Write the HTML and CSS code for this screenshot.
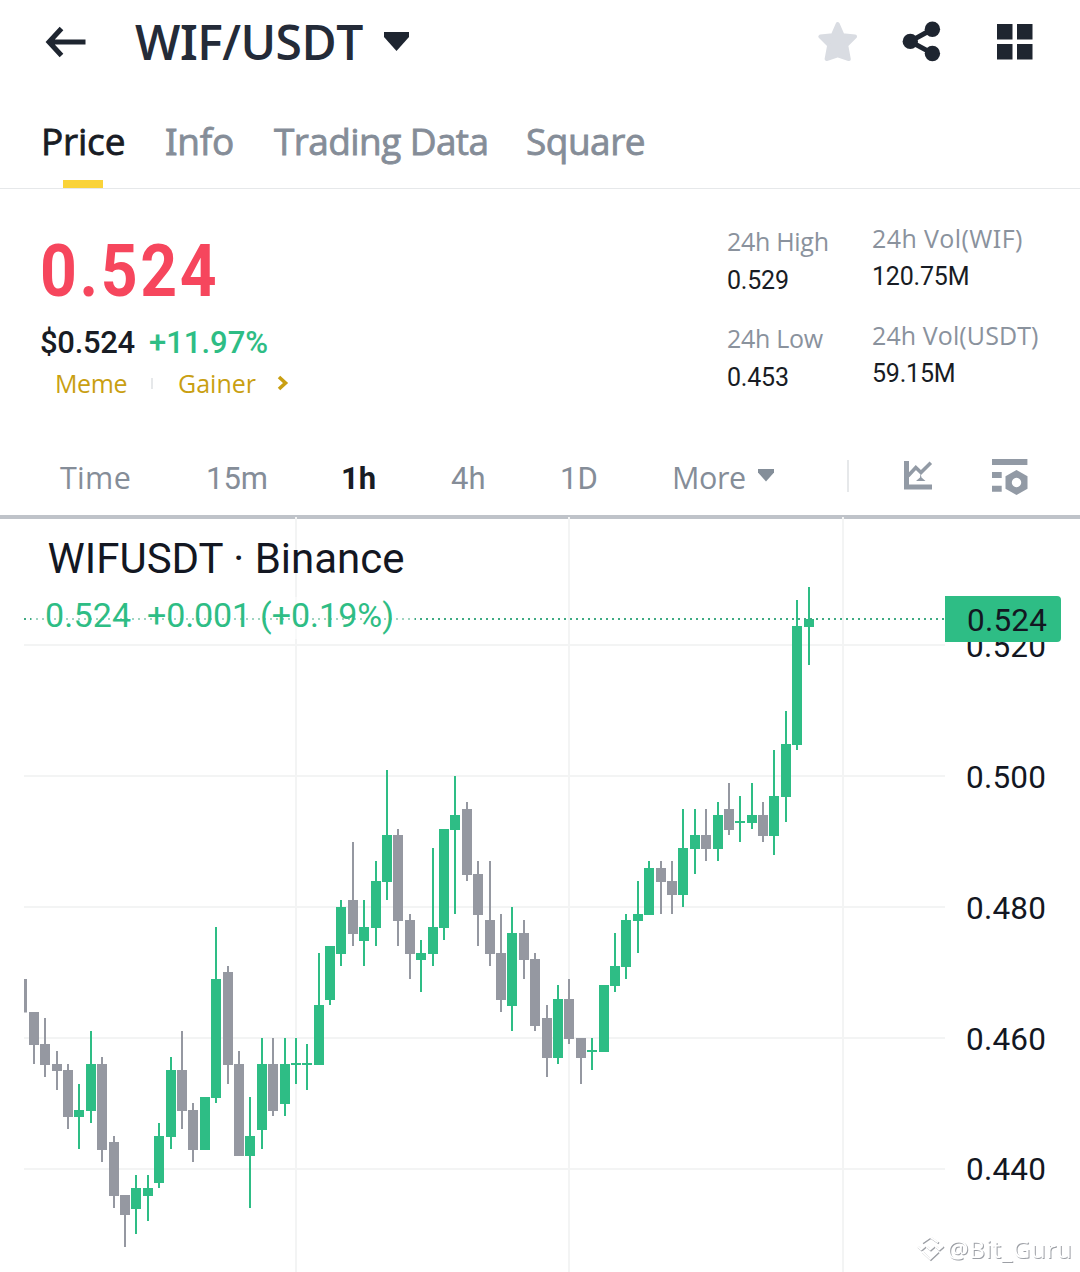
FILE: index.html
```html
<!DOCTYPE html>
<html lang="en">
<head>
<meta charset="utf-8">
<title>WIF/USDT</title>
<link rel="stylesheet" href="styles.css">
</head>
<body>
<header class="topbar">
  <svg class="back" width="44" height="36" viewBox="44 24 44 36"><path d="M61.500 28.500 49 42l12.500 13.500M49 42H85.500" fill="none" stroke="#1e2530" stroke-width="5"/></svg>
  <h1 class="pair">W<span class="slab">I</span>F/USDT</h1>
  <svg class="pair-caret" width="25" height="20" viewBox="0 0 25 20"><path d="M0 0H25V5L12.500 19 0 5Z" fill="#1e2530"/></svg>
  <div class="actions">
    <svg width="40" height="42" viewBox="818 20 40 42"><path d="M837.700 24 842.600 35.200 855 36.600 846.200 45.200 848.800 59 837.700 55.400 826.600 59 829.200 45.200 820.400 36.600 832.800 35.200Z" fill="#d9dce2" stroke="#d9dce2" stroke-width="4" stroke-linejoin="round"/></svg>
    <svg width="40" height="42" viewBox="902 20 40 42"><path d="M932.300 29.300 910.200 41.400 932.300 53.400" fill="none" stroke="#1e2530" stroke-width="5"/><g fill="#1e2530"><circle cx="910.300" cy="41.400" r="7.700"/><circle cx="932.400" cy="29.300" r="7.700"/><circle cx="932.400" cy="53.500" r="7.700"/></g></svg>
    <svg width="36" height="42" viewBox="997 20 36 42"><path d="M997 24h15.500v15.500H997zM1017 24h15.500v15.500H1017zM997 44h15.500v15.500H997zM1017 44h15.500v15.500H1017z" fill="#1e2530"/></svg>
  </div>
</header>

<nav class="tabs">
  <a class="tab active">Price</a>
  <a class="tab info"><span class="slab">I</span>nfo</a>
  <a class="tab trading">Trading Data</a>
  <a class="tab square">Square</a>
</nav>

<section class="summary">
  <div class="quote">
    <div class="last">0.524</div>
    <div class="change"><span class="usd">$0.524</span><span class="pct">+11.97%</span></div>
    <div class="tags">
      <span class="meme">Meme</span><i class="tag-rule"></i><span class="gainer">Gainer</span>
      <svg width="12" height="16" viewBox="0 0 12 16"><path d="M2 2 8.500 8 2 14" fill="none" stroke="#c99f12" stroke-width="3.600"/></svg>
    </div>
  </div>
  <dl class="stats high-low">
    <dt class="s-high">24h High</dt><dd>0.529</dd>
    <dt class="s-low">24h Low</dt><dd>0.453</dd>
  </dl>
  <dl class="stats volume">
    <dt class="s-wif">24h Vol(W<span class="slab">I</span>F)</dt><dd>120.75M</dd>
    <dt class="s-usdt">24h Vol(USDT)</dt><dd>59.15M</dd>
  </dl>
</section>

<nav class="frames">
  <a class="word f-time">Time</a>
  <a class="f-15m">15m</a>
  <a class="f-1h selected">1h</a>
  <a class="f-4h">4h</a>
  <a class="f-1d">1D</a>
  <a class="word f-more">More</a>
  <svg class="more-caret" width="16" height="13" viewBox="0 0 16 13"><path d="M0 0H16V3.500L8 12.500 0 3.500Z" fill="#848e99"/></svg>
  <i class="frame-rule"></i>
  <svg class="line-icon" width="30" height="36" viewBox="903 459 30 36"><g fill="#929aa5"><path d="M904 461h5v23.500h23v5H904zM920.500 473.500l1 4 4 3.500h-9.500l4-3.500z"/><path d="M908 476l7.800-8.500 5.200 5 9.800-9.800" fill="none" stroke="#929aa5" stroke-width="3.600"/></g></svg>
  <svg class="settings-icon" width="37" height="38" viewBox="991 458 37 38"><path d="M992 459h35.400v6H992zM992 472h9.700v6H992zM992 485.700h9.700v6H992zM1016.500 470l11 6.200v12.500l-11 6.200-11-6.200v-12.500zM1016.500 477.800a4.700 4.700 0 1 0 .01 0z" fill="#929aa5" fill-rule="evenodd"/></svg>
</nav>

<main class="chart">
  <svg width="1080" height="757" viewBox="0 515 1080 757">
    <rect y="515" width="1080" height="4" fill="#bfc3c9"/>
    <g class="grid">
      <path d="M24 645H945M24 776H945M24 907H945M24 1038H945M24 1169H945"/>
      <path d="M296 517V1272M569 517V1272M843 517V1272"/>
    </g>
    <g id="candles"></g>
    <path class="last-line" d="M24 619H945"/>
    <rect x="31" y="597" width="384" height="42" fill="#fff" fill-opacity=".5"/>
    <text class="legend" x="47.500" y="573" textLength="357" lengthAdjust="spacingAndGlyphs">WIFUSDT · Binance</text>
    <g class="legend-change">
      <text x="45" y="627" textLength="86">0.524</text>
      <text x="147" y="627" textLength="104">+0.001</text>
      <text x="260" y="627" textLength="134">(+0.19%)</text>
    </g>
    <g class="scale">
      <text x="966" y="657" textLength="80">0.520</text>
      <text x="966" y="788" textLength="80">0.500</text>
      <text x="966" y="919" textLength="80">0.480</text>
      <text x="966" y="1050" textLength="80">0.460</text>
      <text x="966" y="1180" textLength="80">0.440</text>
      <path d="M945 596h112a4 4 0 0 1 4 4v38a4 4 0 0 1-4 4H945z" fill="#2ebd85"/>
      <text x="967" y="631" textLength="80">0.524</text>
    </g>
  </svg>
  <div class="watermark">
    <svg width="28" height="26" viewBox="0 0 28 26"><path d="M6 6.500 14 1l8 5.500M1 10l4 3.500L9 10M10 10l4 3.500 4-3.500M19 10l4 3.500 4-3.500M6 15.500l8 7.500 8-7.500" fill="none" stroke="#fff" stroke-width="1.800"/></svg>
    <span>@Bit_Guru</span>
  </div>
</main>
<script src="chart.js"></script>
</body>
</html>
```
FILE: styles.css
```css
* { box-sizing: border-box; }

body {
  margin: 0;
  width: 1080px;
  height: 1272px;
  overflow: hidden;
  background: #fff;
  color: #181c24;
  font-family: "Open Sans", "Noto Sans", sans-serif;
}

svg { display: block; flex: none; }
.slab { font-family: "Noto Sans", sans-serif; }

.topbar {
  display: flex;
  align-items: center;
  height: 84px;
  padding: 0 47px 0 44px;
}
.pair {
  margin: 0 0 0 47px;
  width: 227px;
  font-size: 48px;
  font-weight: 600;
  line-height: 60px;
  letter-spacing: -.5px;
  white-space: nowrap;
  color: #242b38;
}
.pair-caret { margin-left: 22px; }
.actions {
  display: flex;
  gap: 44px;
  margin: -2px 0 0 auto;
}
.actions svg:last-child { margin-left: 11px; }

.tabs {
  display: flex;
  height: 105px;
  padding-left: 41px;
  border-bottom: 1px solid #e6e8ea;
}
.tab {
  position: relative;
  width: 84px;
  height: 104px;
  margin-right: 40px;
  padding-top: 12px;
  font-size: 37px;
  font-weight: 400;
  line-height: 89px;
  letter-spacing: -.2px;
  white-space: nowrap;
  color: #858d98;
  -webkit-text-stroke: .8px currentColor;
}
.tab.info { width: 69px; }
.tab.trading { width: 212px; letter-spacing: -.6px; }
.tab.square { letter-spacing: -.5px; }
.tab.active { color: #181c24; }
.tab.active::after {
  content: "";
  position: absolute;
  left: 21.500px;
  bottom: 0;
  width: 40px;
  height: 8px;
  background: #fad339;
}

.summary {
  display: flex;
  height: 253px;
  padding-left: 40px;
}
.quote { width: 687px; padding-top: 47px; }
.last {
  width: 210px;
  height: 70px;
  font: 700 73px/70px Roboto, sans-serif;
  color: #f6465d;
  transform: scaleX(.88);
  transform-origin: 0 0;
  letter-spacing: 3px;
}
.change {
  display: flex;
  gap: 14px;
  margin-top: 17px;
  font: 500 31px/40px Roboto, sans-serif;
}
.usd { width: 95px; letter-spacing: -.3px; }
.pct { color: #2ebd85; }
.tags {
  display: flex;
  align-items: center;
  height: 40px;
  padding-left: 15px;
  font-size: 25px;
  color: #c99f12;
}
.meme { width: 72px; letter-spacing: -.4px; }
.tag-rule { width: 2px; height: 11px; margin: 0 25px 0 24px; background: #e6e8ea; }
.gainer { width: 78px; margin-right: 21px; }
.stats { margin: 0; padding-top: 33px; width: 145px; white-space: nowrap; }
.stats.volume { padding-top: 30px; width: 208px; }
.stats dt {
  font-size: 25px;
  line-height: 38px;
  letter-spacing: -.3px;
  color: #8a929d;
}
.stats dt.s-wif { letter-spacing: .4px; }
.stats dt.s-usdt { letter-spacing: .1px; }
.stats dd {
  margin: 0 0 19px;
  padding-top: 2px;
  font: 25px/38px Roboto, sans-serif;
  letter-spacing: -.2px;
}
.stats.volume dd { margin-bottom: 20px; padding-top: 1px; }

.frames {
  display: flex;
  align-items: center;
  height: 73px;
  padding-left: 60px;
  font: 31px/40px Roboto, sans-serif;
  color: #858d98;
}
.word { margin-top: -4px; font-family: "Open Sans", sans-serif; font-size: 30.500px; }
.f-time { width: 146px; letter-spacing: .3px; }
.f-15m { width: 135px; }
.f-1h { width: 110px; }
.f-4h { width: 109px; }
.f-1d { width: 112px; }
.f-more { width: 86px; letter-spacing: -.4px; }
.selected { font-weight: 700; color: #181c24; }
.more-caret { margin-top: -7px; }
.frame-rule { width: 2px; height: 32px; margin: -5px 54px 0 73px; background: #e6e8ea; }
.line-icon { margin-top: -4px; }
.settings-icon { margin: -4px 0 0 58px; }

.chart { position: relative; height: 757px; }
.chart text { font-family: Roboto, sans-serif; }
.grid { fill: none; stroke: #f3f4f4; stroke-width: 2; }
.last-line { fill: none; stroke: #3fab83; stroke-width: 2; stroke-dasharray: 2 4; }
.legend { font-size: 42px; fill: #131722; }
.legend-change { font-size: 34px; fill: #2ebd85; }
.scale { font-size: 31.500px; fill: #131722; }
.up { fill: #2ebd85; }
.down { fill: #9598a1; }

.watermark {
  position: absolute;
  left: 916px;
  bottom: 6px;
  display: flex;
  align-items: center;
  gap: 3px;
  font: 24px/34px "Noto Sans", sans-serif;
  letter-spacing: .6px;
  color: #fff;
  filter: drop-shadow(1px 1px .5px rgba(90, 95, 105, .6));
}
```
FILE: chart.js
```js
// One row per candle: centre x, high, body top, body bottom, low, rising (1) or falling (0).
const candles = [
  [34,1012,1012,1045,1064,0],[45,1018,1044,1065,1077,0],[57,1051,1064,1071,1090,0],
  [68,1064,1070,1117,1129,0],[79,1084,1110,1117,1149,1],[91,1031,1064,1111,1123,1],
  [102,1057,1064,1150,1162,0],[114,1136,1142,1196,1208,0],[125,1195,1195,1215,1247,0],
  [136,1175,1188,1209,1234,1],[148,1175,1188,1196,1221,1],[159,1123,1136,1183,1188,1],
  [171,1057,1070,1137,1149,1],[182,1031,1070,1111,1129,0],[193,1103,1110,1150,1162,0],
  [205,1097,1097,1150,1150,1],[216,927,979,1098,1103,1],[228,966,972,1065,1084,0],
  [239,1051,1064,1156,1156,0],[250,1097,1136,1156,1208,1],[262,1038,1064,1130,1149,1],
  [273,1038,1064,1111,1116,0],[285,1038,1064,1104,1116,1],[296,1038,1063,1065,1084,1],
  [307,1044,1063,1065,1090,1],[319,953,1005,1065,1065,1],[330,946,946,1000,1005,1],
  [341,900,907,954,966,1],[353,842,900,934,946,0],[364,900,927,941,966,1],
  [376,861,881,928,946,1],[387,770,835,882,900,1],[398,829,835,921,946,0],
  [410,914,920,954,979,0],[421,940,953,960,992,1],[433,848,927,954,966,1],
  [444,829,829,928,940,1],[455,776,815,830,914,1],[467,802,809,875,881,0],
  [478,861,874,915,946,0],[490,861,920,954,966,0],[501,914,953,1000,1012,0],
  [512,907,933,1006,1031,1],[524,920,933,960,979,0],[535,953,959,1026,1031,0],
  [547,1005,1018,1058,1077,0],[558,985,999,1058,1064,1],[569,979,999,1039,1044,0],
  [581,1038,1038,1058,1084,0],[592,1038,1050,1052,1070,1],[604,985,985,1052,1052,1],
  [615,933,966,986,992,1],[626,914,920,967,979,1],[638,881,914,921,953,1],
  [649,861,868,915,915,1],[661,861,868,882,914,0],[672,861,881,895,914,0],
  [683,809,848,895,907,1],[695,809,835,849,874,1],[706,809,835,849,861,0],
  [718,802,815,849,861,1],[729,783,809,830,835,0],[740,796,821,823,842,1],
  [752,783,815,823,829,1],[763,802,815,836,842,0],[774,750,796,836,855,1],
  [786,711,744,797,822,1],[797,600,626,745,750,1],[809,587,619,627,665,1]
];

const layer = document.getElementById("candles");

function bar(x, top, width, bottom, kind) {
  const rect = document.createElementNS("http://www.w3.org/2000/svg", "rect");
  rect.setAttribute("x", x);
  rect.setAttribute("y", top);
  rect.setAttribute("width", width);
  rect.setAttribute("height", bottom - top);
  rect.setAttribute("class", kind);
  layer.appendChild(rect);
}

// The first candle is cut off by the chart's left edge.
bar(24, 979, 3, 1012.500, "down");
for (const [x, high, top, bottom, low, rising] of candles) {
  const kind = rising ? "up" : "down";
  bar(x - 1, high, 2, low, kind);
  bar(x - 5, top, 10, bottom, kind);
}
```
